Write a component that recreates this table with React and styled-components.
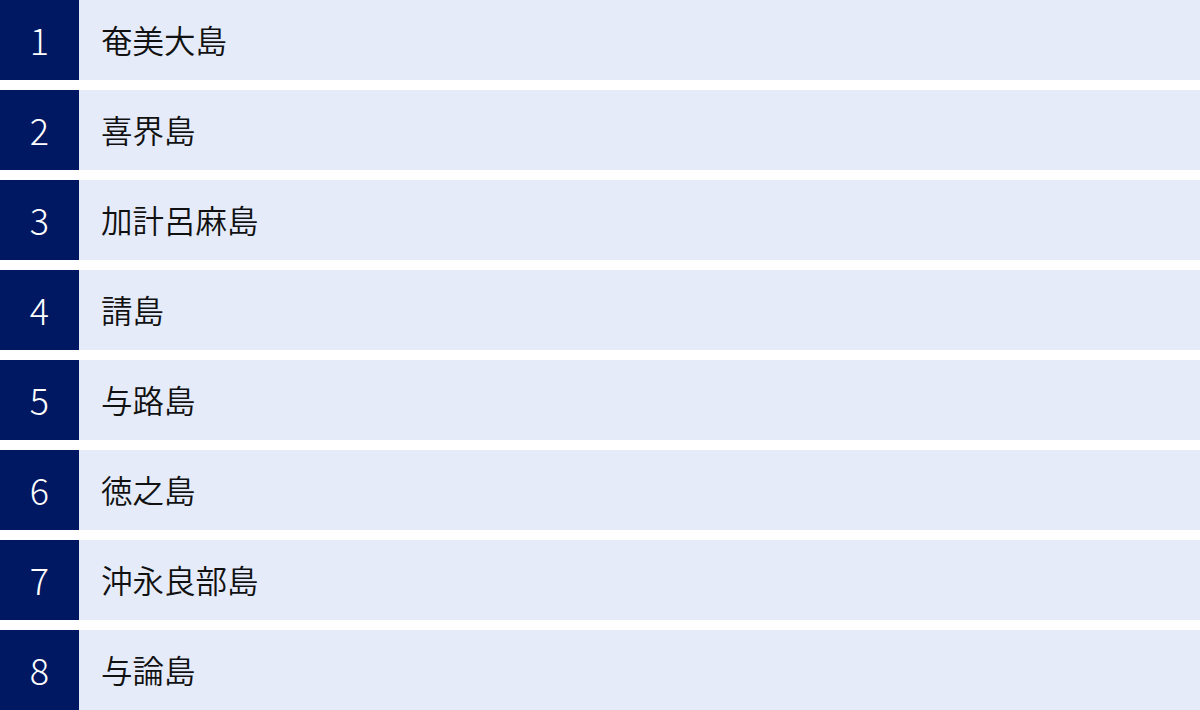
import React from "react";
import styled, { createGlobalStyle } from "styled-components";

const GlobalStyle = createGlobalStyle`
	html, body {
		margin: 0;
		padding: 0;
		background: #ffffff;
	}
	body {
		font-family: "Noto Sans CJK JP", "Noto Sans", sans-serif;
	}
`;

const List = styled.ol`
	list-style: none;
	margin: 0;
	padding: 0;
	display: flex;
	flex-direction: column;
	gap: 10px;
	width: 1200px;
`;

const Row = styled.li`
	display: flex;
	align-items: stretch;
	height: 80px;
	background: #e5ebf9;
`;

const Num = styled.div`
	flex: 0 0 79px;
	display: flex;
	align-items: center;
	justify-content: center;
	padding-bottom: 2px;
	background: #001862;
	color: #ffffff;
	font-size: 36px;
	font-weight: 300;
`;

const Name = styled.div`
	display: flex;
	align-items: center;
	padding-left: 22px;
	padding-bottom: 2px;
	color: #111111;
	font-size: 31.5px;
	font-weight: 350;
`;

const islands = [
	"奄美大島",
	"喜界島",
	"加計呂麻島",
	"請島",
	"与路島",
	"徳之島",
	"沖永良部島",
	"与論島",
];

export default function App() {
	return (
		<>
			<GlobalStyle />
			<List>
				{islands.map((name, i) => (
					<Row key={name}>
						<Num>{i + 1}</Num>
						<Name>{name}</Name>
					</Row>
				))}
			</List>
		</>
	);
}
